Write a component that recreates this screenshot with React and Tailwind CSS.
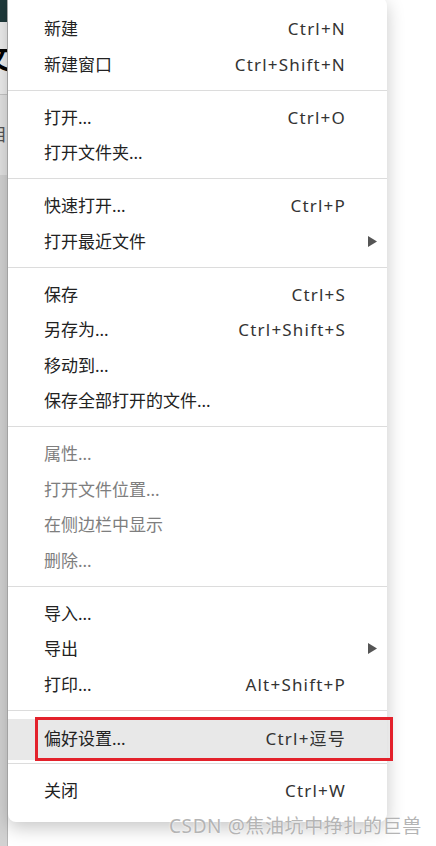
const sections = [
  [
    { label: "新建", key: "Ctrl+N" },
    { label: "新建窗口", key: "Ctrl+Shift+N" },
  ],
  [
    { label: "打开...", key: "Ctrl+O" },
    { label: "打开文件夹..." },
  ],
  [
    { label: "快速打开...", key: "Ctrl+P" },
    { label: "打开最近文件", arrow: true },
  ],
  [
    { label: "保存", key: "Ctrl+S" },
    { label: "另存为...", key: "Ctrl+Shift+S" },
    { label: "移动到..." },
    { label: "保存全部打开的文件..." },
  ],
  [
    { label: "属性...", disabled: true },
    { label: "打开文件位置...", disabled: true },
    { label: "在侧边栏中显示", disabled: true },
    { label: "删除...", disabled: true },
  ],
  [
    { label: "导入..." },
    { label: "导出", arrow: true },
    { label: "打印...", key: "Alt+Shift+P" },
  ],
];

function Item({ item, className = "h-[35.5px]" }) {
  return (
    <div className={`flex items-center justify-between pl-[36px] pr-[41px] ${className}`}>
      <span className={item.disabled ? "text-[#7e7e7e]" : "text-[#222]"}>{item.label}</span>
      {item.key && <span className="text-[#333] tracking-[1.2px]">{item.key}</span>}
      {item.arrow && (
        <svg width="9" height="11" viewBox="0 0 9 11" className="-mr-[31px]">
          <path d="M0 0 L9 5.5 L0 11 Z" fill="#555" />
        </svg>
      )}
    </div>
  );
}

function Sep({ className = "mt-[7.5px] mb-[9px]" }) {
  return <div className={`h-px bg-[#dcdcdc] ${className}`} />;
}

export default function App() {
  return (
    <div className="relative w-[436px] h-[846px] overflow-hidden bg-white flex text-[17px] font-['Noto_Sans','Noto_Sans_CJK_SC',sans-serif]">
      <div className="w-[8px] h-full flex flex-col bg-[#d6d6d6] border-r border-[#b5b5b5] overflow-hidden shrink-0">
        <div className="h-[22px] bg-[#1f3a3b]" />
        <div className="h-[72px] bg-[#ececec] flex items-center">
          <span className="text-[28px] font-bold text-black -ml-[18px] leading-none">文</span>
        </div>
        <div className="h-px bg-[#c4c4c4]" />
        <div className="h-[80px] bg-[#e2e2e2] flex items-center">
          <span className="text-[17px] text-[#555] -ml-[10px]">目</span>
        </div>
        <div className="flex-1 bg-[#d2d2d2]" />
      </div>

      <div className="relative -mt-[4px] h-[826px] w-[379px] bg-white rounded-b-[8px] rounded-tr-[10px] shadow-[0_6px_18px_rgba(0,0,0,0.22)] pt-[15px]">
        {sections.map((sec, i) => (
          <div key={i}>
            {sec.map((item) => (
              <Item key={item.label} item={item} />
            ))}
            <Sep className={i === sections.length - 1 ? "mt-[7.5px] mb-[8px]" : "mt-[7.5px] mb-[9px]"} />
          </div>
        ))}
        <Item item={{ label: "偏好设置...", key: "Ctrl+逗号" }} className="h-[41px] bg-[#e8e8e8]" />
        <Sep className="mt-[3px] mb-[9px]" />
        <Item item={{ label: "关闭", key: "Ctrl+W" }} />
      </div>

      <div className="absolute left-[35px] top-[717px] w-[358px] h-[44px] border-[3px] border-[#e3212b]" />

      <div className="absolute left-[169px] top-[812px] text-[19px] text-[#b4b4b4] tracking-[0.6px] [text-shadow:0_0_2px_#fff]">
        CSDN @焦油坑中挣扎的巨兽
      </div>
    </div>
  );
}
